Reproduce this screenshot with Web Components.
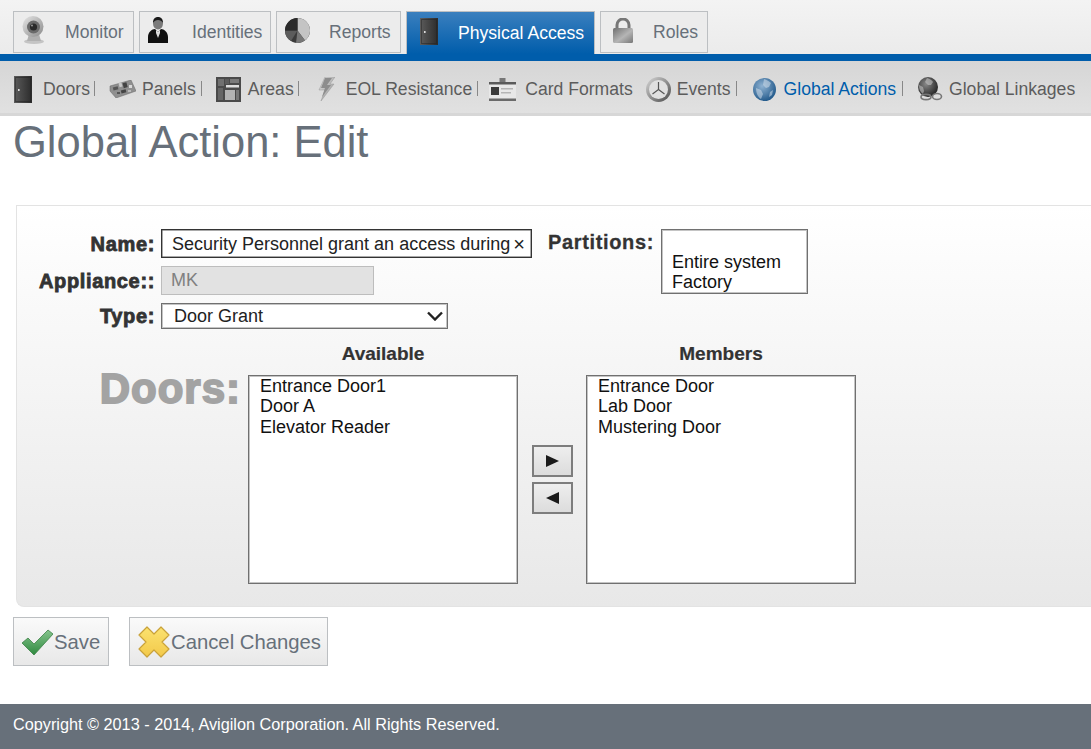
<!DOCTYPE html>
<html>
<head>
<meta charset="utf-8">
<title>Global Action: Edit</title>
<style>
  html, body { margin: 0; padding: 0; background: #fff; overflow: hidden; }
  body { font-family: "Liberation Sans", Arial, sans-serif; font-size: 17.6px; }
  av-page { display: block; height: 749px; }
</style>
</head>
<body>
<av-page>
  <av-topbar slot="top">
    <av-tab icon="webcam" w="121" pad="7" ico="25" gap="19">Monitor</av-tab>
    <av-tab icon="person" w="132" pad="8" ico="20" gap="24">Identities</av-tab>
    <av-tab icon="pie" w="125" pad="8" ico="25" gap="19">Reports</av-tab>
    <av-tab icon="door" w="189" pad="13" ico="18" gap="20" active>Physical Access</av-tab>
    <av-tab icon="lock" w="108" pad="12" ico="20" gap="20">Roles</av-tab>
  </av-topbar>
  <av-subnav slot="top">
    <av-sublink icon="door" ico="18" left="14" gap="11" sep="4">Doors</av-sublink>
    <av-sublink icon="panel" ico="27" left="14" gap="6" sep="5">Panels</av-sublink>
    <av-sublink icon="areas" ico="25" left="14" gap="7" sep="4">Areas</av-sublink>
    <av-sublink icon="bolt" ico="17" left="19" gap="11" sep="5">EOL Resistance</av-sublink>
    <av-sublink icon="card" ico="27" left="11" gap="9" nosep>Card Formats</av-sublink>
    <av-sublink icon="clock" ico="25" left="13" gap="6" sep="5">Events</av-sublink>
    <av-sublink icon="globe" ico="23" left="16" gap="8" sep="6" current>Global Actions</av-sublink>
    <av-sublink icon="linkage" ico="26" left="14" gap="6" nosep>Global Linkages</av-sublink>
  </av-subnav>
  <av-title>Global Action: Edit</av-title>
  <av-panel>
    <av-general>
      <av-field label="Name:" h="29"><av-textbox>Security Personnel grant an access during</av-textbox></av-field>
      <av-field label="Appliance::" h="29"><av-readonly>MK</av-readonly></av-field>
      <av-field label="Type:" h="26"><av-dropdown>Door Grant</av-dropdown></av-field>
      <av-listbox slot="partitions" blank>
        <div>Entire system</div><div>Factory</div>
      </av-listbox>
    </av-general>
    <av-picker label="Doors:">
      <av-listbox slot="available">
        <div>Entrance Door1</div><div>Door A</div><div>Elevator Reader</div>
      </av-listbox>
      <av-listbox slot="members">
        <div>Entrance Door</div><div>Lab Door</div><div>Mustering Door</div>
      </av-listbox>
    </av-picker>
  </av-panel>
  <av-actions>
    <av-button icon="check" w="96" pad="7">Save</av-button>
    <av-button icon="cross" w="199" pad="8">Cancel Changes</av-button>
  </av-actions>
  <av-footer>Copyright © 2013 - 2014, Avigilon Corporation. All Rights Reserved.</av-footer>
</av-page>

<script>
const GRAD = `
  <defs>
    <linearGradient id="door" x1="0" y1="0" x2="1" y2="0"><stop offset="0" stop-color="#5c5c5c"/><stop offset="1" stop-color="#2b2b2b"/></linearGradient>
    <linearGradient id="lt" x1="0" y1="0" x2="1" y2="1"><stop offset="0" stop-color="#e6e6e6"/><stop offset="1" stop-color="#8a8a8a"/></linearGradient>
    <linearGradient id="ring" x1="0" y1="0" x2="1" y2="1"><stop offset="0" stop-color="#d8d8d8"/><stop offset="1" stop-color="#4a4a4a"/></linearGradient>
    <linearGradient id="lock" x1="0" y1="0" x2="1" y2="1"><stop offset="0" stop-color="#6f6f6f"/><stop offset=".55" stop-color="#b5b5b5"/><stop offset="1" stop-color="#777"/></linearGradient>
    <radialGradient id="ball" cx=".4" cy=".35" r=".7"><stop offset="0" stop-color="#888"/><stop offset="1" stop-color="#1f1f1f"/></radialGradient>
    <radialGradient id="blue" cx=".4" cy=".35" r=".7"><stop offset="0" stop-color="#8fb2d2"/><stop offset="1" stop-color="#1e5688"/></radialGradient>
    <linearGradient id="grn" x1="0" y1="0" x2="0" y2="1"><stop offset="0" stop-color="#86c48d"/><stop offset="1" stop-color="#2f8a3f"/></linearGradient>
    <linearGradient id="yel" x1="0" y1="0" x2="0" y2="1"><stop offset="0" stop-color="#fbe26f"/><stop offset="1" stop-color="#f3c94a"/></linearGradient>
  </defs>`;

const ICONS = {
  webcam: [25, 28, `<ellipse cx="13" cy="25.5" rx="10" ry="2.5" fill="#c4c4c4"/><path d="M8 18h10l2 7H6z" fill="#b0b0b0"/><circle cx="12" cy="10.5" r="10.5" fill="url(#lt)"/><circle cx="12.5" cy="11" r="6.5" fill="#6a6a6a"/><circle cx="12.5" cy="11" r="3.6" fill="#2a2a2a"/><circle cx="11" cy="9.5" r="1" fill="#999"/>`],
  person: [20, 26, `<path d="M0 26v-6c0-5 4-8 7-8l3 3 3-3c3 0 7 3 7 8v6z" fill="#111"/><path d="M8 13l2 2 2-2 0 3-2 5-2-5z" fill="#ddd"/><ellipse cx="10" cy="6.5" rx="5" ry="6" fill="#7a7a7a"/><path d="M5 6c0-4 2-6 5-6s5 2 5 6c-1-2-3-3-5-3S6 4 5 6z" fill="#1a1a1a"/>`],
  pie: [25, 25, `<circle cx="12.5" cy="12.5" r="12.5" fill="#3a3a3a"/><path d="M12.5 12.5V0A12.5 12.5 0 0 1 20 22.5z" fill="#c4c4c4"/><path d="M12.5 12.5L20 22.5a12.5 12.5 0 0 1-9 2.4z" fill="#777"/><path d="M12.5 12.5H0A12.5 12.5 0 0 0 6 23z" fill="#5c5c5c"/><path d="M12.5 12.5V0A12.5 12.5 0 0 0 0 12.5z" fill="#2a2a2a"/>`],
  door: [18, 27, `<rect width="18" height="27" fill="url(#door)"/><rect x="1.5" y="1.5" width="15" height="24" fill="none" stroke="#222" stroke-opacity=".5"/><rect x="4" y="13" width="1.6" height="2" fill="#ddd"/>`],
  lock: [20, 25, `<path d="M4 11V7a6 6 0 0 1 12 0v4" fill="none" stroke="#777" stroke-width="3"/><rect y="10" width="20" height="15" rx="1.5" fill="url(#lock)"/>`],
  panel: [27, 18, `<path d="M1 6L22 0l5 11-20 7-6-7z" fill="#8f8f8f" stroke="#666" stroke-width=".5"/><rect x="4" y="7" width="5" height="3" fill="#555" transform="rotate(-15 6 8)"/><rect x="10" y="3" width="3" height="4" fill="#c8c8c8" transform="rotate(-15 11 5)"/><rect x="14" y="3" width="4" height="5" fill="#444" transform="rotate(-15 15 5)"/><rect x="12" y="10" width="5" height="3" fill="#444" transform="rotate(-15 14 11)"/><rect x="20" y="5" width="3" height="3" fill="#d8d8d8"/><rect x="8" y="12" width="3" height="2" fill="#555"/><rect x="19" y="10" width="3" height="2" fill="#bbb"/>`],
  areas: [25, 25, `<rect width="25" height="25" fill="#4a4a4a"/><rect x="2" y="2" width="6" height="7" fill="#707070"/><rect x="9" y="2" width="4" height="5" fill="#5c5c5c"/><rect x="14" y="2" width="9" height="4" fill="#7a7a7a"/><rect x="10" y="8" width="13" height="2.5" fill="#ddd"/><rect x="2" y="11" width="5" height="12" fill="#666"/><rect x="9" y="13" width="10" height="10" fill="#b4b4b4"/><rect x="20" y="13" width="3" height="10" fill="#777"/>`],
  bolt: [17, 24, `<path d="M7 0h10l-5 7h4L3 24l4-11H1z" fill="url(#lt)" stroke="#999" stroke-width=".5"/><path d="M7 1L3 11h4l-3 9 9-12H9l5-7z" fill="#8d8d8d"/>`],
  card: [27, 23, `<rect x="10.5" y="0" width="6" height="5" fill="#777"/><rect y="4" width="27" height="19" fill="#e8e8e8"/><rect y="4" width="27" height="2.5" fill="#5a5a5a"/><rect y="20.5" width="27" height="2.5" fill="#6a6a6a"/><rect x="2" y="9" width="8" height="8" fill="#3a3a3a"/><rect x="12" y="10" width="12" height="1.5" fill="#b5b5b5"/><rect x="12" y="14" width="10" height="1.5" fill="#b5b5b5"/>`],
  clock: [25, 25, `<circle cx="12.5" cy="12.5" r="12.5" fill="url(#ring)"/><circle cx="12.5" cy="12.5" r="9.5" fill="#e0e0e0"/><path d="M12.5 5v7.5L6.5 17M12.5 12.5L18.5 17" fill="none" stroke="#555" stroke-width="1.2"/>`],
  globe: [23, 23, `<circle cx="11.5" cy="11.5" r="11.5" fill="url(#blue)"/><path d="M11 1c3 1 5 2 7 4l-2 4-3 1-3-3zM3 10l5 2 2 4-2 5c-3-2-5-6-5-11zM17 14l3-2-1 5-3 2z" fill="#cfdde9" fill-opacity=".55"/>`],
  linkage: [26, 24, `<circle cx="11" cy="10" r="10" fill="url(#ball)"/><path d="M10 1c3 1 5 2 6 4l-2 3-3 0-3-3zM2 8l4 2 1 4-1 3C3 15 2 12 2 8z" fill="#ccc" fill-opacity=".55"/><g fill="none" stroke="#777" stroke-width="1.6"><ellipse cx="9" cy="20" rx="5" ry="2.6"/><ellipse cx="20" cy="19.5" rx="4.5" ry="3"/></g>`],
  check: [32, 26, `<path d="M1 14l6-5 6 6L27 1l5 4-19 21z" fill="url(#grn)" stroke="#3d8148" stroke-width=".8"/>`],
  cross: [32, 32, `<path d="M9 1l7 7 7-7 8 8-7 7 7 7-8 8-7-7-7 7-8-8 7-7-7-7z" fill="url(#yel)" stroke="#c9a23a" stroke-width="1.2" stroke-linejoin="round"/>`]
};

function iconSvg(name) {
  const i = ICONS[name];
  return `<svg xmlns="http://www.w3.org/2000/svg" width="${i[0]}" height="${i[1]}" viewBox="0 0 ${i[0]} ${i[1]}">${GRAD}${i[2]}</svg>`;
}

class Base extends HTMLElement {
  constructor() {
    super();
    this.attachShadow({mode: "open"});
  }
  html() { return "<slot></slot>"; }
  connectedCallback() {
    this.shadowRoot.innerHTML = this.html();
  }
}

class AvTopbar extends Base {
  html() { return `<style>
    :host{display:flex;align-items:flex-end;height:54px;box-sizing:border-box;padding-left:13px;
      background:linear-gradient(#f3f3f3,#ebebeb);gap:5px}
    </style><slot></slot>`; }
}

class AvTab extends Base {
  html() {
    const a = n => this.getAttribute(n);
    const active = this.hasAttribute("active");
    return `<style>
    :host{display:flex;align-items:center;box-sizing:border-box;width:${a("w")}px;height:${active ? 43 : 42}px;margin-bottom:${active ? 0 : 1}px;
      padding-left:${a("pad")}px;
      border:1px solid #bcbfc2;${active ? "border-bottom:0;" : ""}
      background:${active ? "linear-gradient(#3a7fbe,#005dab)" : "#ececec"};
      color:${active ? "#fff" : "#67707a"};font-size:17.6px;font-family:"Liberation Sans",Arial,sans-serif;white-space:nowrap}
    .i{display:flex;width:${a("ico")}px;margin-right:${a("gap")}px;margin-top:-4px}
    </style><span class="i">${iconSvg(a("icon"))}</span><slot></slot>`;
  }
}

class AvSubnav extends Base {
  html() { return `<style>
    :host{display:flex;align-items:center;height:62px;box-sizing:border-box;padding-top:4px;
      border-top:7px solid #005dab;border-bottom:3px solid #d7d7d7;
      background:linear-gradient(#d6d6d6,#e1e1e1)}
    </style><slot></slot>`; }
}

class AvSublink extends Base {
  html() {
    const a = n => this.getAttribute(n);
    const cur = this.hasAttribute("current");
    const sep = this.hasAttribute("nosep") ? "" : `<span class="s" style="margin-left:${a("sep")}px"></span>`;
    return `<style>
    :host{display:flex;align-items:center;padding-left:${a("left")}px;white-space:nowrap;
      color:${cur ? "#005dab" : "#5c5c5c"};font-size:17.6px;font-family:"Liberation Sans",Arial,sans-serif}
    .i{display:flex;width:${a("ico")}px;margin-right:${a("gap")}px}
    .s{width:1px;height:15px;background:#888;margin-top:-2px}
    </style><span class="i">${iconSvg(a("icon"))}</span><slot></slot>${sep}`;
  }
}

class AvTitle extends Base {
  html() { return `<style>
    :host{display:block;height:50px;line-height:52px;padding-left:13px;color:#67707a;font-size:43.5px;
      font-family:"Liberation Sans",Arial,sans-serif;white-space:nowrap}
    </style><slot></slot>`; }
}

class AvPanel extends Base {
  html() { return `<style>
    :host{display:block;margin:39px 0 0 16px;height:402px;box-sizing:border-box;padding-top:23px;
      border:1px solid #e3e3e3;border-right:0;border-radius:0 0 0 8px;
      background:linear-gradient(#fff,#e8e8e8)}
    </style><slot></slot>`; }
}

class AvGeneral extends Base {
  html() { return `<style>
    :host{display:flex;align-items:flex-start}
    .l{display:flex;flex-direction:column;gap:8px;width:515px}
    .t{margin-left:16px;width:106px;font:bold 20px/26px "Liberation Sans",Arial,sans-serif;letter-spacing:.65px;color:#333;-webkit-text-stroke:.3px #333;white-space:nowrap}
    ::slotted(av-listbox){margin-left:7px;width:147px;height:65px}
    </style><div class="l"><slot></slot></div><div class="t">Partitions:</div><slot name="partitions"></slot>`; }
}

class AvField extends Base {
  html() {
    return `<style>
    :host{display:flex;align-items:center;height:${this.getAttribute("h")}px}
    .n{width:138px;margin-right:6px;text-align:right;font:bold 20px/1 "Liberation Sans",Arial,sans-serif;color:#333;-webkit-text-stroke:.8px #333;letter-spacing:.65px;white-space:nowrap}
    </style><div class="n">${this.getAttribute("label")}</div><slot></slot>`;
  }
}

class AvTextbox extends Base {
  html() { return `<style>
    :host{display:flex;align-items:center;justify-content:space-between;box-sizing:border-box;width:371px;height:29px;
      padding:1px 6px 0 10px;border:1px solid #333;box-shadow:inset 0 0 0 .5px #555;background:#fff;color:#222;font-size:18px;white-space:nowrap;
      font-family:"Liberation Sans",Arial,sans-serif}
    span{font-size:20px;line-height:1}
    </style><slot></slot><span>×</span>`; }
}

class AvReadonly extends Base {
  html() { return `<style>
    :host{display:flex;align-items:center;box-sizing:border-box;width:213px;height:29px;padding-left:9px;
      border:1px solid #bdbdbd;background:#e2e2e2;color:#808080;font-size:18px;font-family:"Liberation Sans",Arial,sans-serif}
    </style><slot></slot>`; }
}

class AvDropdown extends Base {
  html() { return `<style>
    :host{display:flex;align-items:center;justify-content:space-between;box-sizing:border-box;width:287px;height:26px;
      padding:0 4px 0 12px;border:1px solid #707070;box-shadow:inset 0 0 0 1px #c4c4c4;background:#fff;color:#222;font-size:18px;font-family:"Liberation Sans",Arial,sans-serif}
    svg{display:block}
    </style><slot></slot><svg width="16" height="10" viewBox="0 0 16 10"><path d="M1 1.5l7 7 7-7" fill="none" stroke="#222" stroke-width="2.4"/></svg>`; }
}

class AvListbox extends Base {
  html() {
    const blank = this.hasAttribute("blank");
    return `<style>
    :host{display:block;box-sizing:border-box;padding:${blank ? 22 : 0}px 0 0 ${blank ? 10 : 11}px;border:1px solid #707070;box-shadow:inset 0 0 0 1px #c4c4c4;background:#fff;color:#111;
      font:18px/20.4px "Liberation Sans",Arial,sans-serif;white-space:nowrap;overflow:hidden}
    </style><slot></slot>`;
  }
}

class AvPicker extends Base {
  html() { return `<style>
    :host{display:grid;grid-template-columns:231px 270px 68px 270px;grid-template-rows:22px 209px;row-gap:10px;margin-top:14px}
    h4{margin:0;text-align:center;font:bold 19px/22px "Liberation Sans",Arial,sans-serif;color:#333;-webkit-text-stroke:.2px #333}
    .d{grid-row:2;text-align:right;padding-right:7px;font:bold 42px/28px "Liberation Sans",Arial,sans-serif;color:#a3a3a3;-webkit-text-stroke:1.8px #a3a3a3;letter-spacing:1px}
    .m{display:flex;flex-direction:column;align-items:center;gap:5px;padding-top:70px}
    .b{display:flex;align-items:center;justify-content:center;box-sizing:border-box;width:41px;height:32px;border:2px solid #7d7d7d;background:linear-gradient(#eee,#dcdcdc)}
    ::slotted(av-listbox){height:209px}
    </style>
    <div></div><h4>Available</h4><div></div><h4>Members</h4>
    <div class="d">${this.getAttribute("label")}</div>
    <slot name="available"></slot>
    <div class="m">
      <div class="b"><svg width="13" height="12" viewBox="0 0 13 12"><path d="M0 0l13 6-13 6z" fill="#1a1a1a"/></svg></div>
      <div class="b"><svg width="13" height="12" viewBox="0 0 13 12"><path d="M13 0L0 6l13 6z" fill="#1a1a1a"/></svg></div>
    </div>
    <slot name="members"></slot>`; }
}

class AvActions extends Base {
  html() { return `<style>
    :host{display:flex;gap:20px;margin-top:10px;padding-left:13px}
    </style><slot></slot>`; }
}

class AvButton extends Base {
  html() {
    return `<style>
    :host{display:flex;align-items:center;box-sizing:border-box;width:${this.getAttribute("w")}px;height:49px;padding:1px 0 0 ${this.getAttribute("pad")}px;
      border:1px solid #bcbfc2;background:linear-gradient(#fafafa,#e8e8e8);color:#67707a;font-size:20.3px;
      font-family:"Liberation Sans",Arial,sans-serif;white-space:nowrap}
    .i{display:flex;margin-right:1px}
    </style><span class="i">${iconSvg(this.getAttribute("icon"))}</span><slot></slot>`;
  }
}

class AvFooter extends Base {
  html() { return `<style>
    :host{display:flex;align-items:center;height:45px;box-sizing:border-box;padding:0 0 4px 13px;margin-top:38px;background:#67707a;color:#fff;
      font-size:16.25px;font-family:"Liberation Sans",Arial,sans-serif;white-space:nowrap}
    </style><slot></slot>`; }
}

customElements.define("av-topbar", AvTopbar);
customElements.define("av-tab", AvTab);
customElements.define("av-subnav", AvSubnav);
customElements.define("av-sublink", AvSublink);
customElements.define("av-title", AvTitle);
customElements.define("av-panel", AvPanel);
customElements.define("av-general", AvGeneral);
customElements.define("av-field", AvField);
customElements.define("av-textbox", AvTextbox);
customElements.define("av-readonly", AvReadonly);
customElements.define("av-dropdown", AvDropdown);
customElements.define("av-listbox", AvListbox);
customElements.define("av-picker", AvPicker);
customElements.define("av-actions", AvActions);
customElements.define("av-button", AvButton);
customElements.define("av-footer", AvFooter);
</script>
</body>
</html>
